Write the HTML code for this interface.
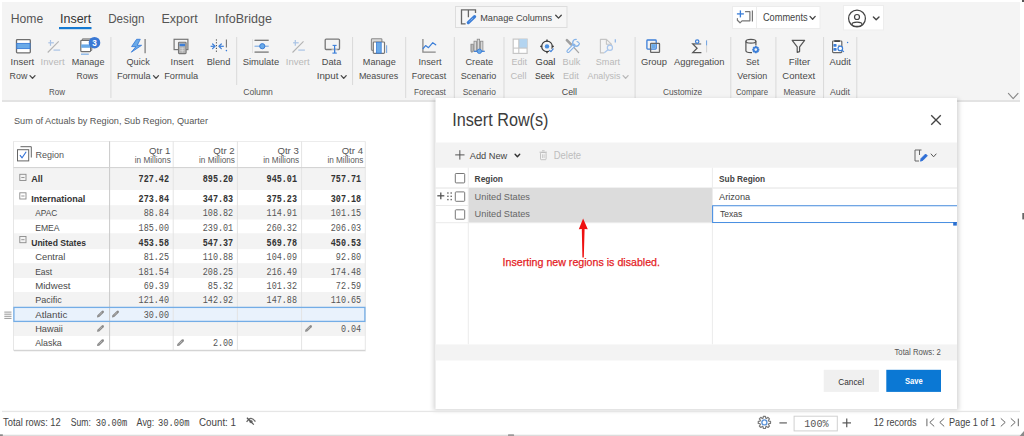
<!DOCTYPE html>
<html><head><meta charset="utf-8"><title>Insert Row(s)</title>
<style>
html,body{margin:0;padding:0;background:#fff;width:1024px;height:436px;overflow:hidden}
svg{display:block;font-family:'Liberation Sans',sans-serif}
svg text{white-space:pre}
</style></head><body>
<svg width="1024" height="436" viewBox="0 0 1024 436">
<rect x="2" y="2" width="1018" height="98" fill="#f4f4f4"/>
<rect x="2" y="100" width="1018" height="2" fill="#e3e3e3"/>
<rect x="1022" y="0" width="2" height="2" fill="#555"/>
<text x="10.75" y="23.00" font-size="13.30" fill="#555" textLength="32.45" lengthAdjust="spacingAndGlyphs">Home</text>
<text x="60.00" y="23.00" font-size="13.30" fill="#333" textLength="31.20" lengthAdjust="spacingAndGlyphs">Insert</text>
<rect x="59" y="27" width="32.5" height="2.2" fill="#1479d2"/>
<text x="108.20" y="23.00" font-size="13.30" fill="#555" textLength="36.30" lengthAdjust="spacingAndGlyphs">Design</text>
<text x="161.50" y="23.00" font-size="13.30" fill="#555" textLength="36.20" lengthAdjust="spacingAndGlyphs">Export</text>
<text x="214.80" y="23.00" font-size="13.30" fill="#555" textLength="57.10" lengthAdjust="spacingAndGlyphs">InfoBridge</text>
<rect x="455.5" y="6.5" width="111.5" height="21" fill="#f6f6f6" stroke="#dddddd" stroke-width="1"/>
<text x="480.20" y="20.60" font-size="9.92" fill="#444" textLength="72.00" lengthAdjust="spacingAndGlyphs">Manage Columns</text>
<path d="M555.7 15.25 L558.5 18.15 L561.3 15.25" stroke="#444" fill="none" stroke-width="1.3" stroke-linecap="round" stroke-linejoin="round"/>
<rect x="732.5" y="6.5" width="87.5" height="22" fill="#ffffff" stroke="#ececec" stroke-width="1"/>
<line x1="756.5" y1="6.5" x2="756.5" y2="28.5" stroke="#ececec" stroke-width="1"/>
<text x="762.90" y="21.30" font-size="9.99" fill="#444" textLength="44.70" lengthAdjust="spacingAndGlyphs">Comments</text>
<path d="M810.0 16.400000000000002 L812.6 19.2 L815.2 16.400000000000002" stroke="#444" fill="none" stroke-width="1.3" stroke-linecap="round" stroke-linejoin="round"/>
<rect x="843.5" y="5.5" width="40" height="24.5" fill="#ffffff" stroke="#ededed" stroke-width="1"/>
<circle cx="857" cy="18.5" r="8.4" fill="none" stroke="#444" stroke-width="1.25"/>
<circle cx="857" cy="17.0" r="2.5" fill="none" stroke="#444" stroke-width="1.2"/>
<ellipse cx="857" cy="24.2" rx="5.0" ry="2.1" fill="none" stroke="#444" stroke-width="1.2"/>
<path d="M873.4000000000001 16.900000000000002 L876.2 19.7 L879.0 16.900000000000002" stroke="#444" fill="none" stroke-width="1.4" stroke-linecap="round" stroke-linejoin="round"/>
<line x1="110.9" y1="37" x2="110.9" y2="98" stroke="#d9d9d9" stroke-width="1"/>
<line x1="405.7" y1="37" x2="405.7" y2="98" stroke="#d9d9d9" stroke-width="1"/>
<line x1="454.3" y1="37" x2="454.3" y2="98" stroke="#d9d9d9" stroke-width="1"/>
<line x1="504" y1="37" x2="504" y2="98" stroke="#d9d9d9" stroke-width="1"/>
<line x1="635.1" y1="37" x2="635.1" y2="98" stroke="#d9d9d9" stroke-width="1"/>
<line x1="730.8" y1="37" x2="730.8" y2="98" stroke="#d9d9d9" stroke-width="1"/>
<line x1="775.9" y1="37" x2="775.9" y2="98" stroke="#d9d9d9" stroke-width="1"/>
<line x1="823.6" y1="37" x2="823.6" y2="98" stroke="#d9d9d9" stroke-width="1"/>
<line x1="856.8" y1="37" x2="856.8" y2="98" stroke="#d9d9d9" stroke-width="1"/>
<line x1="236.7" y1="37" x2="236.7" y2="85" stroke="#d9d9d9" stroke-width="1"/>
<line x1="352.6" y1="37" x2="352.6" y2="85" stroke="#d9d9d9" stroke-width="1"/>
<path d="M1008.4000000000001 93.3 L1013.2 98.7 L1018.0 93.3" stroke="#888" fill="none" stroke-width="1.1" stroke-linecap="round" stroke-linejoin="round"/>
<text x="10.60" y="65.00" font-size="9.90" fill="#4a4a4a" textLength="23.60" lengthAdjust="spacingAndGlyphs">Insert</text>
<text x="9.60" y="79.00" font-size="9.90" fill="#4a4a4a" textLength="17.70" lengthAdjust="spacingAndGlyphs">Row</text>
<path d="M30.0 75.65 L32.5 78.35 L35.0 75.65" stroke="#4a4a4a" fill="none" stroke-width="1.35" stroke-linecap="round" stroke-linejoin="round"/>
<text x="40.60" y="65.00" font-size="9.90" fill="#b9b9b9" textLength="24.00" lengthAdjust="spacingAndGlyphs">Invert</text>
<text x="71.80" y="65.00" font-size="9.90" fill="#4a4a4a" textLength="32.60" lengthAdjust="spacingAndGlyphs">Manage</text>
<text x="76.60" y="79.00" font-size="9.90" fill="#4a4a4a" textLength="21.40" lengthAdjust="spacingAndGlyphs">Rows</text>
<text x="49.00" y="94.50" font-size="9.40" fill="#555" textLength="16.00" lengthAdjust="spacingAndGlyphs">Row</text>
<text x="126.50" y="65.00" font-size="9.90" fill="#4a4a4a" textLength="23.30" lengthAdjust="spacingAndGlyphs">Quick</text>
<text x="116.90" y="79.00" font-size="9.90" fill="#4a4a4a" textLength="33.70" lengthAdjust="spacingAndGlyphs">Formula</text>
<path d="M153.5 75.65 L156 78.35 L158.5 75.65" stroke="#4a4a4a" fill="none" stroke-width="1.35" stroke-linecap="round" stroke-linejoin="round"/>
<text x="170.60" y="65.00" font-size="9.90" fill="#4a4a4a" textLength="23.00" lengthAdjust="spacingAndGlyphs">Insert</text>
<text x="164.20" y="79.00" font-size="9.90" fill="#4a4a4a" textLength="34.00" lengthAdjust="spacingAndGlyphs">Formula</text>
<text x="206.70" y="65.00" font-size="9.90" fill="#4a4a4a" textLength="23.60" lengthAdjust="spacingAndGlyphs">Blend</text>
<text x="242.70" y="65.00" font-size="9.90" fill="#4a4a4a" textLength="36.40" lengthAdjust="spacingAndGlyphs">Simulate</text>
<text x="285.80" y="65.00" font-size="9.90" fill="#b9b9b9" textLength="23.90" lengthAdjust="spacingAndGlyphs">Invert</text>
<text x="321.80" y="65.00" font-size="9.90" fill="#4a4a4a" textLength="19.50" lengthAdjust="spacingAndGlyphs">Data</text>
<text x="316.70" y="79.00" font-size="9.90" fill="#4a4a4a" textLength="21.70" lengthAdjust="spacingAndGlyphs">Input</text>
<path d="M341.2 75.65 L343.7 78.35 L346.2 75.65" stroke="#4a4a4a" fill="none" stroke-width="1.35" stroke-linecap="round" stroke-linejoin="round"/>
<text x="362.80" y="65.00" font-size="9.90" fill="#4a4a4a" textLength="32.90" lengthAdjust="spacingAndGlyphs">Manage</text>
<text x="358.90" y="79.00" font-size="9.90" fill="#4a4a4a" textLength="39.30" lengthAdjust="spacingAndGlyphs">Measures</text>
<text x="243.20" y="94.50" font-size="9.40" fill="#555" textLength="29.70" lengthAdjust="spacingAndGlyphs">Column</text>
<text x="418.50" y="65.00" font-size="9.90" fill="#4a4a4a" textLength="23.00" lengthAdjust="spacingAndGlyphs">Insert</text>
<text x="411.80" y="79.00" font-size="9.90" fill="#4a4a4a" textLength="34.30" lengthAdjust="spacingAndGlyphs">Forecast</text>
<text x="414.00" y="94.50" font-size="9.40" fill="#555" textLength="31.80" lengthAdjust="spacingAndGlyphs">Forecast</text>
<text x="465.40" y="65.00" font-size="9.90" fill="#4a4a4a" textLength="27.80" lengthAdjust="spacingAndGlyphs">Create</text>
<text x="460.70" y="79.00" font-size="9.90" fill="#4a4a4a" textLength="35.70" lengthAdjust="spacingAndGlyphs">Scenario</text>
<text x="462.70" y="94.50" font-size="9.40" fill="#555" textLength="33.20" lengthAdjust="spacingAndGlyphs">Scenario</text>
<text x="511.60" y="65.00" font-size="9.90" fill="#b9b9b9" textLength="15.40" lengthAdjust="spacingAndGlyphs">Edit</text>
<text x="510.40" y="79.00" font-size="9.90" fill="#b9b9b9" textLength="16.10" lengthAdjust="spacingAndGlyphs">Cell</text>
<text x="535.60" y="65.00" font-size="9.90" fill="#333" textLength="19.80" lengthAdjust="spacingAndGlyphs">Goal</text>
<text x="535.00" y="79.00" font-size="9.90" fill="#333" textLength="19.30" lengthAdjust="spacingAndGlyphs">Seek</text>
<text x="562.60" y="65.00" font-size="9.90" fill="#b9b9b9" textLength="17.70" lengthAdjust="spacingAndGlyphs">Bulk</text>
<text x="563.00" y="79.00" font-size="9.90" fill="#b9b9b9" textLength="15.70" lengthAdjust="spacingAndGlyphs">Edit</text>
<text x="595.80" y="65.00" font-size="9.90" fill="#b9b9b9" textLength="24.20" lengthAdjust="spacingAndGlyphs">Smart</text>
<text x="587.50" y="79.00" font-size="9.90" fill="#b9b9b9" textLength="32.90" lengthAdjust="spacingAndGlyphs">Analysis</text>
<path d="M623.1 75.65 L625.6 78.35 L628.1 75.65" stroke="#b9b9b9" fill="none" stroke-width="1.35" stroke-linecap="round" stroke-linejoin="round"/>
<text x="561.80" y="94.50" font-size="9.40" fill="#444" textLength="15.20" lengthAdjust="spacingAndGlyphs">Cell</text>
<text x="640.90" y="65.00" font-size="9.90" fill="#4a4a4a" textLength="26.00" lengthAdjust="spacingAndGlyphs">Group</text>
<text x="674.10" y="65.00" font-size="9.90" fill="#4a4a4a" textLength="50.30" lengthAdjust="spacingAndGlyphs">Aggregation</text>
<text x="662.90" y="94.50" font-size="9.40" fill="#555" textLength="39.30" lengthAdjust="spacingAndGlyphs">Customize</text>
<text x="745.90" y="65.00" font-size="9.90" fill="#4a4a4a" textLength="13.30" lengthAdjust="spacingAndGlyphs">Set</text>
<text x="737.20" y="79.00" font-size="9.90" fill="#4a4a4a" textLength="30.00" lengthAdjust="spacingAndGlyphs">Version</text>
<text x="736.00" y="94.50" font-size="9.40" fill="#555" textLength="32.00" lengthAdjust="spacingAndGlyphs">Compare</text>
<text x="788.80" y="65.00" font-size="9.90" fill="#4a4a4a" textLength="21.50" lengthAdjust="spacingAndGlyphs">Filter</text>
<text x="782.30" y="79.00" font-size="9.90" fill="#4a4a4a" textLength="32.80" lengthAdjust="spacingAndGlyphs">Context</text>
<text x="783.50" y="94.50" font-size="9.40" fill="#555" textLength="32.10" lengthAdjust="spacingAndGlyphs">Measure</text>
<text x="829.50" y="65.00" font-size="9.90" fill="#4a4a4a" textLength="21.40" lengthAdjust="spacingAndGlyphs">Audit</text>
<text x="830.00" y="94.50" font-size="9.40" fill="#555" textLength="20.00" lengthAdjust="spacingAndGlyphs">Audit</text>
<rect x="16.5" y="39.6" width="13.8" height="13.3" fill="#fff" stroke="#6e6e6e" stroke-width="1.3" rx="0.8"/>
<rect x="16.8" y="43.4" width="13.2" height="5.2" fill="#6aaae8" stroke="#3b7ed8" stroke-width="0.9"/>
<line x1="48.300000000000004" y1="42.8" x2="53.9" y2="42.8" stroke="#a9c3e5" stroke-width="1.2"/>
<line x1="50.5" y1="40.0" x2="50.5" y2="45.8" stroke="#a9c3e5" stroke-width="1.2"/>
<line x1="47.7" y1="52.5" x2="58.7" y2="41.3" stroke="#b3b3b3" stroke-width="1.1"/>
<line x1="53.5" y1="50.1" x2="60.1" y2="50.1" stroke="#a9c3e5" stroke-width="1.2"/>
<line x1="293.09999999999997" y1="42.8" x2="298.7" y2="42.8" stroke="#a9c3e5" stroke-width="1.2"/>
<line x1="295.29999999999995" y1="40.0" x2="295.29999999999995" y2="45.8" stroke="#a9c3e5" stroke-width="1.2"/>
<line x1="292.5" y1="52.5" x2="303.5" y2="41.3" stroke="#b3b3b3" stroke-width="1.1"/>
<line x1="298.29999999999995" y1="50.1" x2="304.9" y2="50.1" stroke="#a9c3e5" stroke-width="1.2"/>
<rect x="82.4" y="38.9" width="9.4" height="11.6" fill="#e0e0e0" stroke="#8c8c8c" stroke-width="1.1" rx="0.8"/>
<rect x="80.8" y="40.3" width="9.8" height="11.3" fill="#fff" stroke="#6e6e6e" stroke-width="1.2" rx="0.8"/>
<rect x="81.2" y="44.4" width="9" height="3.4" fill="#6aaae8"/>
<line x1="81" y1="54.2" x2="88.8" y2="54.2" stroke="#8ab6e8" stroke-width="1.4"/>
<circle cx="94.5" cy="42.7" r="5.8" fill="#3a78d4"/>
<text x="94.5" y="45.6" font-size="8.2" font-weight="700" fill="#fff" text-anchor="middle">3</text>
<path d="M139.9 39.3 L136.6 39.3 L131.6 46.6 L136 46.6 L131.3 52.2 L141.6 45.3 L137.6 45.3 Z" stroke="#3b7ed8" fill="#6aaae8" stroke-width="0.9" stroke-linejoin="round" stroke-linecap="round"/>
<line x1="145.1" y1="39.1" x2="145.1" y2="53.3" stroke="#777" stroke-width="1.2"/>
<rect x="174.1" y="39.3" width="13.8" height="10.3" fill="none" stroke="#777" stroke-width="1.2"/>
<rect x="178.5" y="42.3" width="7.6" height="11.3" fill="#b4b4b4" stroke="#777" stroke-width="1.1" rx="0.8"/>
<rect x="179.6" y="43.8" width="5.4" height="2.4" fill="#3b7ed8"/>
<line x1="180.2" y1="48.3" x2="184.4" y2="48.3" stroke="#dddddd" stroke-width="0.6"/>
<line x1="180.2" y1="50.6" x2="184.4" y2="50.6" stroke="#dddddd" stroke-width="0.6"/>
<line x1="182.3" y1="47.3" x2="182.3" y2="52.6" stroke="#dddddd" stroke-width="0.6"/>
<line x1="216.4" y1="39.4" x2="216.4" y2="53.3" stroke="#444" stroke-width="1" stroke-dasharray="1.2 1.6"/>
<line x1="210.6" y1="46.3" x2="214.6" y2="46.3" stroke="#3b7ed8" stroke-width="1.2"/>
<path d="M212.6 44 L215 46.3 L212.6 48.6" stroke="#3b7ed8" fill="none" stroke-width="1.2" stroke-linejoin="round" stroke-linecap="round"/>
<line x1="223.8" y1="46.3" x2="219.2" y2="46.3" stroke="#3b7ed8" stroke-width="1.2"/>
<path d="M221.3 44 L218.9 46.3 L221.3 48.6" stroke="#3b7ed8" fill="none" stroke-width="1.2" stroke-linejoin="round" stroke-linecap="round"/>
<line x1="226.4" y1="39.6" x2="226.4" y2="47.6" stroke="#777" stroke-width="1.1"/>
<circle cx="226.4" cy="50.6" r="0.8" fill="#3b7ed8"/>
<line x1="252.5" y1="39.2" x2="252.5" y2="53" stroke="#dcdcdc" stroke-width="0.8"/>
<line x1="254.5" y1="40.3" x2="268.7" y2="40.3" stroke="#777" stroke-width="1.3"/>
<line x1="254.5" y1="46.2" x2="268.7" y2="46.2" stroke="#7aa9e2" stroke-width="1.1"/>
<circle cx="262.3" cy="46.2" r="2.6" fill="#6aaae8" stroke="#3b7ed8" stroke-width="1"/>
<line x1="254.5" y1="52.1" x2="268.7" y2="52.1" stroke="#777" stroke-width="1.3"/>
<rect x="325.2" y="39.1" width="14.3" height="10.4" fill="none" stroke="#777" stroke-width="1.3" rx="1"/>
<line x1="334.6" y1="45.6" x2="334.6" y2="52.9" stroke="#3b7ed8" stroke-width="1.2"/>
<line x1="332.6" y1="45.4" x2="336.6" y2="45.4" stroke="#3b7ed8" stroke-width="1.1"/>
<line x1="332.4" y1="53.1" x2="336.8" y2="53.1" stroke="#3b7ed8" stroke-width="1.1"/>
<rect x="331.5" y="49.5" width="6" height="1.0" fill="#f4f4f4"/>
<line x1="334.6" y1="48.5" x2="334.6" y2="52.9" stroke="#3b7ed8" stroke-width="1.2"/>
<rect x="371.4" y="38.8" width="10.5" height="11.6" fill="#dadada" stroke="#8c8c8c" stroke-width="1.1" rx="0.8"/>
<rect x="373.3" y="42" width="11.2" height="11.4" fill="#fff" stroke="#777" stroke-width="1.2" rx="0.8"/>
<rect x="376.5" y="42.3" width="4.7" height="10.8" fill="#6aaae8" stroke="#3b7ed8" stroke-width="0.8"/>
<line x1="386.6" y1="45.2" x2="386.6" y2="53.1" stroke="#7aa9e2" stroke-width="1.1"/>
<path d="M422.9 39.1 L422.9 52.1 L435.7 52.1" stroke="#888" fill="none" stroke-width="1.3"/>
<path d="M423.1 48.5 L425.6 45.6 L428.5 47.7 L432.8 42.7 L435.7 44.8" stroke="#3b7ed8" fill="none" stroke-width="1.2" stroke-linejoin="round" stroke-linecap="round"/>
<rect x="470.9" y="44.2" width="2.4" height="7.099999999999994" fill="#d8d8d8" stroke="#8a8a8a" stroke-width="0.8"/>
<rect x="474.0" y="41.2" width="2.4" height="10.099999999999994" fill="#d8d8d8" stroke="#8a8a8a" stroke-width="0.8"/>
<rect x="477.2" y="39.2" width="2.4" height="12.099999999999994" fill="#d8d8d8" stroke="#8a8a8a" stroke-width="0.8"/>
<rect x="480.5" y="41.2" width="2.4" height="10.099999999999994" fill="#d8d8d8" stroke="#8a8a8a" stroke-width="0.8"/>
<line x1="471.9" y1="44" x2="471.9" y2="53" stroke="#888" stroke-width="0.8"/>
<line x1="474" y1="51.3" x2="484.8" y2="51.3" stroke="#3b7ed8" stroke-width="1.2"/>
<circle cx="479.4" cy="51.3" r="2.2" fill="#6aaae8" stroke="#3b7ed8" stroke-width="0.9"/>
<rect x="513.2" y="39.1" width="13.9" height="14.3" fill="#fff" stroke="#c6c6c6" stroke-width="1.2"/>
<rect x="518.8" y="39.1" width="8.3" height="9" fill="#b3d4f0"/>
<line x1="518.8" y1="39.1" x2="518.8" y2="53.4" stroke="#c6c6c6" stroke-width="1.1"/>
<line x1="513.2" y1="48.1" x2="527.1" y2="48.1" stroke="#c6c6c6" stroke-width="1.1"/>
<circle cx="547" cy="46.4" r="5.3" fill="none" stroke="#3a3a3a" stroke-width="1.2"/>
<line x1="547" y1="39.6" x2="547" y2="41.6" stroke="#3a3a3a" stroke-width="1.4"/>
<line x1="547" y1="51.2" x2="547" y2="53.2" stroke="#3a3a3a" stroke-width="1.4"/>
<line x1="540.2" y1="46.4" x2="542.2" y2="46.4" stroke="#3a3a3a" stroke-width="1.4"/>
<line x1="551.8" y1="46.4" x2="553.8" y2="46.4" stroke="#3a3a3a" stroke-width="1.4"/>
<circle cx="547" cy="46.4" r="2.2" fill="#4a8fe0"/>
<rect x="549.3" y="48.6" width="4" height="4" fill="#f4f4f4"/>
<path d="M549.6 50.4 L550.9 51.6 L553.2 48.8" stroke="#3b7ed8" fill="none" stroke-width="1.1" stroke-linejoin="round" stroke-linecap="round"/>
<line x1="566.9" y1="40.1" x2="571.0" y2="44.3" stroke="#a0a0a0" stroke-width="2.6" stroke-linejoin="round" stroke-linecap="round"/>
<line x1="571.0" y1="44.3" x2="578.6" y2="52.6" stroke="#a6a6a6" stroke-width="1.3" stroke-linejoin="round" stroke-linecap="round"/>
<path d="M568.2 51.2 L573.8 45.4" stroke="#86b3e8" fill="none" stroke-width="3.6" stroke-linejoin="round" stroke-linecap="round"/>
<path d="M568.2 51.2 L573.8 45.4" stroke="#f1f5fa" fill="none" stroke-width="1.4" stroke-linejoin="round" stroke-linecap="round"/>
<path d="M576.2 39.4 A3.4 3.4 0 1 0 579.4 43.6" stroke="#86b3e8" fill="none" stroke-width="1.3" stroke-linejoin="round" stroke-linecap="round"/>
<path d="M577.0 41.6 L578.8 42.6" stroke="#86b3e8" fill="none" stroke-width="1.1" stroke-linejoin="round" stroke-linecap="round"/>
<path d="M606.4 39.4 L600.4 39.4 L600.4 52.9 L603.8 52.9 M606.4 39.4 L611.4 44.2 L611.4 45 M606.4 39.4 L606.4 44.2 L611.4 44.2" stroke="#c4c4c4" fill="none" stroke-width="1.1" stroke-linejoin="round" stroke-linecap="round"/>
<circle cx="609.9" cy="47.8" r="2.6" fill="none" stroke="#a9c6ec" stroke-width="1.2"/>
<line x1="608.0" y1="49.8" x2="604.3" y2="52.8" stroke="#a9c6ec" stroke-width="1.2"/>
<line x1="615.3" y1="39.3" x2="615.3" y2="42.5" stroke="#8cb4e8" stroke-width="1.2"/>
<rect x="646.9" y="40.0" width="9.3" height="9.1" fill="none" stroke="#3b7ed8" stroke-width="1.3" rx="0.8"/>
<rect x="650.6" y="43.4" width="8.9" height="8.9" fill="none" stroke="#666" stroke-width="1.3" rx="0.6"/>
<rect x="651.3" y="44.1" width="4.3" height="4.4" fill="#6aaae8"/>
<path d="M701.2 44 L692.7 43.9 L697.1 48.2 L692.7 52.7 L701.4 52.7" stroke="#555" fill="none" stroke-width="1.2" stroke-linejoin="miter"/>
<circle cx="697.2" cy="41.6" r="1.7" fill="none" stroke="#3b7ed8" stroke-width="1.2"/>
<line x1="706.6" y1="40.4" x2="706.6" y2="45.6" stroke="#6a9fe0" stroke-width="1.0"/>
<line x1="706.6" y1="45.6" x2="706.6" y2="52.4" stroke="#c8c8c8" stroke-width="0.8"/>
<ellipse cx="750.9" cy="41.3" rx="5" ry="1.9" fill="none" stroke="#555" stroke-width="1.2"/>
<path d="M745.9 41.3 L745.9 50.8 Q745.9 52.6 750.9 52.6 L752 52.6 M755.9 41.3 L755.9 45.6" stroke="#555" fill="none" stroke-width="1.2"/>
<g transform="translate(755.8 49.6)">
<path d="M3.58 -0.92 L3.58 0.92 L2.34 1.13 L2.46 0.86 L3.18 1.89 L1.89 3.18 L0.86 2.46 L1.13 2.34 L0.92 3.58 L-0.92 3.58 L-1.13 2.34 L-0.86 2.46 L-1.89 3.18 L-3.18 1.89 L-2.46 0.86 L-2.34 1.13 L-3.58 0.92 L-3.58 -0.92 L-2.34 -1.13 L-2.46 -0.86 L-3.18 -1.89 L-1.89 -3.18 L-0.86 -2.46 L-1.13 -2.34 L-0.92 -3.58 L0.92 -3.58 L1.13 -2.34 L0.86 -2.46 L1.89 -3.18 L3.18 -1.89 L2.46 -0.86 L2.34 -1.13Z" fill="#3b7ed8"/>
<circle cx="0" cy="0" r="1.3" fill="#f4f4f4"/>
</g>
<path d="M792.2 40.3 L804.6 40.3 L799.6 46.8 L799.6 51.6 L797.2 52.4 L797.2 46.8 Z" stroke="#555" fill="none" stroke-width="1.2" stroke-linejoin="round" stroke-linecap="round"/>
<rect x="832.6" y="41" width="9.2" height="11.6" fill="#fff" stroke="#666" stroke-width="1.2" rx="0.8"/>
<rect x="834.3" y="40.2" width="5.6" height="1.8" fill="#444"/>
<rect x="833.4" y="44.1" width="3.2" height="2.6" fill="#3b7ed8" rx="0.6"/>
<rect x="833.4" y="48.1" width="3.2" height="2.6" fill="#3b7ed8" rx="0.6"/>
<line x1="837.8" y1="45.3" x2="840.4" y2="45.3" stroke="#999" stroke-width="0.8"/>
<circle cx="840.3" cy="48.4" r="2.3" fill="#fff" stroke="#3b7ed8" stroke-width="1.2"/>
<line x1="841.9" y1="50.1" x2="843.9" y2="51.9" stroke="#3b7ed8" stroke-width="1.2"/>
<circle cx="847.6" cy="42.5" r="0.7" fill="#3b7ed8"/>
<path d="M465.6 23.8 L461.5 23.8 L461.5 9.8 L475.5 9.8 L475.5 13.1 M468.4 9.8 L468.4 17.2" stroke="#666" fill="none" stroke-width="1.3"/>
<path d="M468.3 22.6 L474.6 16.6" stroke="#3b7ed8" fill="none" stroke-width="3.2" stroke-linejoin="round" stroke-linecap="round"/>
<path d="M469.6 21.4 L473.4 17.8" stroke="#dfeaf8" fill="none" stroke-width="0.7" stroke-dasharray="1 0.9"/>
<line x1="736.9" y1="13.9" x2="743.9" y2="13.9" stroke="#3b7ed8" stroke-width="1.3"/>
<line x1="740.4" y1="10.4" x2="740.4" y2="17.4" stroke="#3b7ed8" stroke-width="1.3"/>
<path d="M745.5 11.7 L749.9 11.7 L749.9 20.8 L742 20.8 L740 22.8 L737.4 20.3 L737.4 18.6" stroke="#777" fill="none" stroke-width="1.2" stroke-linejoin="round" stroke-linecap="round"/>
<line x1="752.4" y1="10.6" x2="752.4" y2="21.6" stroke="#777" stroke-width="1.2"/>
<text x="14.00" y="124.10" font-size="9.89" fill="#555" textLength="194.00" lengthAdjust="spacingAndGlyphs">Sum of Actuals by Region, Sub Region, Quarter</text>
<rect x="14.0" y="350" width="351.8" height="1.5" fill="#e9e9e9"/>
<rect x="13.5" y="141.3" width="351.8" height="26.2" fill="#ffffff"/>
<line x1="13.5" y1="141.5" x2="365.3" y2="141.5" stroke="#ececec" stroke-width="1"/>
<rect x="13.5" y="168" width="351.8" height="22" fill="#f3f3f3"/>
<rect x="13.5" y="190" width="351.8" height="15.199999999999989" fill="#ffffff"/>
<rect x="13.5" y="205.2" width="351.8" height="14.5" fill="#f3f3f3"/>
<rect x="13.5" y="219.7" width="351.8" height="13.600000000000023" fill="#ffffff"/>
<rect x="13.5" y="233.3" width="351.8" height="16.0" fill="#f3f3f3"/>
<rect x="13.5" y="249.3" width="351.8" height="13.899999999999977" fill="#ffffff"/>
<rect x="13.5" y="263.2" width="351.8" height="15.0" fill="#f3f3f3"/>
<rect x="13.5" y="278.2" width="351.8" height="13.800000000000011" fill="#ffffff"/>
<rect x="13.5" y="292" width="351.8" height="15" fill="#f3f3f3"/>
<rect x="13.5" y="307" width="351.8" height="14.600000000000023" fill="#e9f2fc"/>
<rect x="13.5" y="321.6" width="351.8" height="14.399999999999977" fill="#f3f3f3"/>
<rect x="13.5" y="336" width="351.8" height="14" fill="#ffffff"/>
<line x1="173.2" y1="141.3" x2="173.2" y2="350" stroke="#e4e4e4" stroke-width="1"/>
<line x1="237.4" y1="141.3" x2="237.4" y2="350" stroke="#e4e4e4" stroke-width="1"/>
<line x1="301.6" y1="141.3" x2="301.6" y2="350" stroke="#e4e4e4" stroke-width="1"/>
<line x1="109.6" y1="141.3" x2="109.6" y2="350" stroke="#c9c9c9" stroke-width="1"/>
<line x1="13.5" y1="141.3" x2="13.5" y2="350" stroke="#e6e6e6" stroke-width="1"/>
<line x1="365.3" y1="141.3" x2="365.3" y2="350" stroke="#e6e6e6" stroke-width="1"/>
<line x1="13.5" y1="167.6" x2="365.3" y2="167.6" stroke="#d0d0d0" stroke-width="1"/>
<line x1="13.5" y1="350.3" x2="365.3" y2="350.3" stroke="#cfcfcf" stroke-width="1"/>
<rect x="13.9" y="307.4" width="351.0" height="14.0" fill="none" stroke="#74ade6" stroke-width="1.3"/>
<path d="M20.5 146.7 H31.3 V157.5" stroke="#666" fill="none" stroke-width="1"/>
<rect x="17.5" y="149.7" width="11.2" height="11.2" fill="#fff" stroke="#666" stroke-width="1"/>
<path d="M19.9 155.2 L22.1 157.8 L26.2 151.8" stroke="#2f6fd6" fill="none" stroke-width="1.1" stroke-linejoin="round"/>
<text x="35.50" y="158.00" font-size="9.71" fill="#555" textLength="28.50" lengthAdjust="spacingAndGlyphs">Region</text>
<text x="149.06" y="153.80" font-size="9.60" fill="#555">Qtr 1</text>
<text x="134.80" y="163.30" font-size="8.20" fill="#5a5a5a">in Millions</text>
<text x="213.26" y="153.80" font-size="9.60" fill="#555">Qtr 2</text>
<text x="199.00" y="163.30" font-size="8.20" fill="#5a5a5a">in Millions</text>
<text x="277.46" y="153.80" font-size="9.60" fill="#555">Qtr 3</text>
<text x="263.20" y="163.30" font-size="8.20" fill="#5a5a5a">in Millions</text>
<text x="341.66" y="153.80" font-size="9.60" fill="#555">Qtr 4</text>
<text x="327.40" y="163.30" font-size="8.20" fill="#5a5a5a">in Millions</text>
<rect x="19.8" y="174.3" width="6.2" height="6.2" fill="none" stroke="#8a8a8a" stroke-width="0.9"/>
<line x1="21.3" y1="177.5" x2="24.5" y2="177.5" stroke="#8a8a8a" stroke-width="0.9"/>
<text x="31.20" y="182.40" font-size="9.60" fill="#333" font-weight="700" textLength="11.60" lengthAdjust="spacingAndGlyphs">All</text>
<text x="138.58" y="182.40" font-size="10.50" fill="#333" font-weight="700" font-family="Liberation Mono" textLength="30.42" lengthAdjust="spacingAndGlyphs">727.42</text>
<text x="202.78" y="182.40" font-size="10.50" fill="#333" font-weight="700" font-family="Liberation Mono" textLength="30.42" lengthAdjust="spacingAndGlyphs">895.20</text>
<text x="266.58" y="182.40" font-size="10.50" fill="#333" font-weight="700" font-family="Liberation Mono" textLength="30.42" lengthAdjust="spacingAndGlyphs">945.01</text>
<text x="330.78" y="182.40" font-size="10.50" fill="#333" font-weight="700" font-family="Liberation Mono" textLength="30.42" lengthAdjust="spacingAndGlyphs">757.71</text>
<rect x="19.8" y="192.8" width="6.2" height="6.2" fill="none" stroke="#8a8a8a" stroke-width="0.9"/>
<line x1="21.3" y1="196.0" x2="24.5" y2="196.0" stroke="#8a8a8a" stroke-width="0.9"/>
<text x="31.20" y="201.50" font-size="9.60" fill="#333" font-weight="700" textLength="54.10" lengthAdjust="spacingAndGlyphs">International</text>
<text x="138.58" y="201.50" font-size="10.50" fill="#333" font-weight="700" font-family="Liberation Mono" textLength="30.42" lengthAdjust="spacingAndGlyphs">273.84</text>
<text x="202.78" y="201.50" font-size="10.50" fill="#333" font-weight="700" font-family="Liberation Mono" textLength="30.42" lengthAdjust="spacingAndGlyphs">347.83</text>
<text x="266.58" y="201.50" font-size="10.50" fill="#333" font-weight="700" font-family="Liberation Mono" textLength="30.42" lengthAdjust="spacingAndGlyphs">375.23</text>
<text x="330.78" y="201.50" font-size="10.50" fill="#333" font-weight="700" font-family="Liberation Mono" textLength="30.42" lengthAdjust="spacingAndGlyphs">307.18</text>
<text x="35.20" y="215.50" font-size="9.80" fill="#4a4a4a" textLength="22.00" lengthAdjust="spacingAndGlyphs">APAC</text>
<text x="143.65" y="215.50" font-size="10.50" fill="#555" font-family="Liberation Mono" textLength="25.35" lengthAdjust="spacingAndGlyphs">88.84</text>
<text x="202.78" y="215.50" font-size="10.50" fill="#555" font-family="Liberation Mono" textLength="30.42" lengthAdjust="spacingAndGlyphs">108.82</text>
<text x="266.58" y="215.50" font-size="10.50" fill="#555" font-family="Liberation Mono" textLength="30.42" lengthAdjust="spacingAndGlyphs">114.91</text>
<text x="330.78" y="215.50" font-size="10.50" fill="#555" font-family="Liberation Mono" textLength="30.42" lengthAdjust="spacingAndGlyphs">101.15</text>
<text x="35.20" y="230.70" font-size="9.80" fill="#4a4a4a" textLength="24.40" lengthAdjust="spacingAndGlyphs">EMEA</text>
<text x="138.58" y="230.70" font-size="10.50" fill="#555" font-family="Liberation Mono" textLength="30.42" lengthAdjust="spacingAndGlyphs">185.00</text>
<text x="202.78" y="230.70" font-size="10.50" fill="#555" font-family="Liberation Mono" textLength="30.42" lengthAdjust="spacingAndGlyphs">239.01</text>
<text x="266.58" y="230.70" font-size="10.50" fill="#555" font-family="Liberation Mono" textLength="30.42" lengthAdjust="spacingAndGlyphs">260.32</text>
<text x="330.78" y="230.70" font-size="10.50" fill="#555" font-family="Liberation Mono" textLength="30.42" lengthAdjust="spacingAndGlyphs">206.03</text>
<rect x="19.8" y="236.50000000000003" width="6.2" height="6.2" fill="none" stroke="#8a8a8a" stroke-width="0.9"/>
<line x1="21.3" y1="239.70000000000002" x2="24.5" y2="239.70000000000002" stroke="#8a8a8a" stroke-width="0.9"/>
<text x="31.20" y="245.60" font-size="9.60" fill="#333" font-weight="700" textLength="54.80" lengthAdjust="spacingAndGlyphs">United States</text>
<text x="138.58" y="245.60" font-size="10.50" fill="#333" font-weight="700" font-family="Liberation Mono" textLength="30.42" lengthAdjust="spacingAndGlyphs">453.58</text>
<text x="202.78" y="245.60" font-size="10.50" fill="#333" font-weight="700" font-family="Liberation Mono" textLength="30.42" lengthAdjust="spacingAndGlyphs">547.37</text>
<text x="266.58" y="245.60" font-size="10.50" fill="#333" font-weight="700" font-family="Liberation Mono" textLength="30.42" lengthAdjust="spacingAndGlyphs">569.78</text>
<text x="330.78" y="245.60" font-size="10.50" fill="#333" font-weight="700" font-family="Liberation Mono" textLength="30.42" lengthAdjust="spacingAndGlyphs">450.53</text>
<text x="35.20" y="259.90" font-size="9.80" fill="#4a4a4a" textLength="30.20" lengthAdjust="spacingAndGlyphs">Central</text>
<text x="143.65" y="259.90" font-size="10.50" fill="#555" font-family="Liberation Mono" textLength="25.35" lengthAdjust="spacingAndGlyphs">81.25</text>
<text x="202.78" y="259.90" font-size="10.50" fill="#555" font-family="Liberation Mono" textLength="30.42" lengthAdjust="spacingAndGlyphs">110.88</text>
<text x="266.58" y="259.90" font-size="10.50" fill="#555" font-family="Liberation Mono" textLength="30.42" lengthAdjust="spacingAndGlyphs">104.09</text>
<text x="335.85" y="259.90" font-size="10.50" fill="#555" font-family="Liberation Mono" textLength="25.35" lengthAdjust="spacingAndGlyphs">92.80</text>
<text x="35.20" y="274.50" font-size="9.80" fill="#4a4a4a" textLength="17.00" lengthAdjust="spacingAndGlyphs">East</text>
<text x="138.58" y="274.50" font-size="10.50" fill="#555" font-family="Liberation Mono" textLength="30.42" lengthAdjust="spacingAndGlyphs">181.54</text>
<text x="202.78" y="274.50" font-size="10.50" fill="#555" font-family="Liberation Mono" textLength="30.42" lengthAdjust="spacingAndGlyphs">208.25</text>
<text x="266.58" y="274.50" font-size="10.50" fill="#555" font-family="Liberation Mono" textLength="30.42" lengthAdjust="spacingAndGlyphs">216.49</text>
<text x="330.78" y="274.50" font-size="10.50" fill="#555" font-family="Liberation Mono" textLength="30.42" lengthAdjust="spacingAndGlyphs">174.48</text>
<text x="35.20" y="288.90" font-size="9.80" fill="#4a4a4a" textLength="35.30" lengthAdjust="spacingAndGlyphs">Midwest</text>
<text x="143.65" y="288.90" font-size="10.50" fill="#555" font-family="Liberation Mono" textLength="25.35" lengthAdjust="spacingAndGlyphs">69.39</text>
<text x="207.85" y="288.90" font-size="10.50" fill="#555" font-family="Liberation Mono" textLength="25.35" lengthAdjust="spacingAndGlyphs">85.32</text>
<text x="266.58" y="288.90" font-size="10.50" fill="#555" font-family="Liberation Mono" textLength="30.42" lengthAdjust="spacingAndGlyphs">101.32</text>
<text x="335.85" y="288.90" font-size="10.50" fill="#555" font-family="Liberation Mono" textLength="25.35" lengthAdjust="spacingAndGlyphs">72.59</text>
<text x="35.20" y="303.30" font-size="9.80" fill="#4a4a4a" textLength="26.60" lengthAdjust="spacingAndGlyphs">Pacific</text>
<text x="138.58" y="303.30" font-size="10.50" fill="#555" font-family="Liberation Mono" textLength="30.42" lengthAdjust="spacingAndGlyphs">121.40</text>
<text x="202.78" y="303.30" font-size="10.50" fill="#555" font-family="Liberation Mono" textLength="30.42" lengthAdjust="spacingAndGlyphs">142.92</text>
<text x="266.58" y="303.30" font-size="10.50" fill="#555" font-family="Liberation Mono" textLength="30.42" lengthAdjust="spacingAndGlyphs">147.88</text>
<text x="330.78" y="303.30" font-size="10.50" fill="#555" font-family="Liberation Mono" textLength="30.42" lengthAdjust="spacingAndGlyphs">110.65</text>
<text x="35.20" y="317.50" font-size="9.80" fill="#4a4a4a" textLength="32.10" lengthAdjust="spacingAndGlyphs">Atlantic</text>
<text x="143.65" y="317.50" font-size="10.50" fill="#555" font-family="Liberation Mono" textLength="25.35" lengthAdjust="spacingAndGlyphs">30.00</text>
<text x="35.20" y="332.20" font-size="9.80" fill="#4a4a4a" textLength="27.70" lengthAdjust="spacingAndGlyphs">Hawaii</text>
<text x="340.92" y="332.20" font-size="10.50" fill="#555" font-family="Liberation Mono" textLength="20.28" lengthAdjust="spacingAndGlyphs">0.04</text>
<text x="35.20" y="346.40" font-size="9.80" fill="#4a4a4a" textLength="26.60" lengthAdjust="spacingAndGlyphs">Alaska</text>
<text x="212.92" y="346.40" font-size="10.50" fill="#555" font-family="Liberation Mono" textLength="20.28" lengthAdjust="spacingAndGlyphs">2.00</text>
<path d="M97.0 317.40000000000003 L97.4 315.3 L101.80000000000001 311.0 Q102.9 310.2 103.7 311.0 Q104.4 312.0 103.60000000000001 312.8 L99.2 317.1 Z" stroke="none" fill="#8a8a8a" stroke-width="1"/>
<path d="M98.80000000000001 315.5 L102.0 312.5" stroke="#e8e8e8" fill="none" stroke-width="0.7" stroke-dasharray="0.9 0.8"/>
<path d="M112.0 317.40000000000003 L112.4 315.3 L116.80000000000001 311.0 Q117.9 310.2 118.7 311.0 Q119.4 312.0 118.60000000000001 312.8 L114.2 317.1 Z" stroke="none" fill="#8a8a8a" stroke-width="1"/>
<path d="M113.80000000000001 315.5 L117.0 312.5" stroke="#e8e8e8" fill="none" stroke-width="0.7" stroke-dasharray="0.9 0.8"/>
<path d="M97.0 331.8 L97.4 329.7 L101.80000000000001 325.4 Q102.9 324.59999999999997 103.7 325.4 Q104.4 326.4 103.60000000000001 327.2 L99.2 331.5 Z" stroke="none" fill="#8a8a8a" stroke-width="1"/>
<path d="M98.80000000000001 329.9 L102.0 326.9" stroke="#e8e8e8" fill="none" stroke-width="0.7" stroke-dasharray="0.9 0.8"/>
<path d="M97.0 346.0 L97.4 343.9 L101.80000000000001 339.59999999999997 Q102.9 338.79999999999995 103.7 339.59999999999997 Q104.4 340.59999999999997 103.60000000000001 341.4 L99.2 345.7 Z" stroke="none" fill="#8a8a8a" stroke-width="1"/>
<path d="M98.80000000000001 344.09999999999997 L102.0 341.09999999999997" stroke="#e8e8e8" fill="none" stroke-width="0.7" stroke-dasharray="0.9 0.8"/>
<path d="M305.0 331.8 L305.4 329.7 L309.79999999999995 325.4 Q310.9 324.59999999999997 311.7 325.4 Q312.4 326.4 311.59999999999997 327.2 L307.2 331.5 Z" stroke="none" fill="#8a8a8a" stroke-width="1"/>
<path d="M306.79999999999995 329.9 L310.0 326.9" stroke="#e8e8e8" fill="none" stroke-width="0.7" stroke-dasharray="0.9 0.8"/>
<path d="M177.0 346.0 L177.4 343.9 L181.8 339.59999999999997 Q182.9 338.79999999999995 183.70000000000002 339.59999999999997 Q184.4 340.59999999999997 183.6 341.4 L179.20000000000002 345.7 Z" stroke="none" fill="#8a8a8a" stroke-width="1"/>
<path d="M178.8 344.09999999999997 L182.0 341.09999999999997" stroke="#e8e8e8" fill="none" stroke-width="0.7" stroke-dasharray="0.9 0.8"/>
<line x1="4.3" y1="312.1" x2="11.5" y2="312.1" stroke="#999" stroke-width="1"/>
<line x1="4.3" y1="314.20000000000005" x2="11.5" y2="314.20000000000005" stroke="#999" stroke-width="1"/>
<line x1="4.3" y1="316.3" x2="11.5" y2="316.3" stroke="#999" stroke-width="1"/>
<line x1="4.3" y1="318.40000000000003" x2="11.5" y2="318.40000000000003" stroke="#999" stroke-width="1"/>
<defs><filter id="sh" x="-5%" y="-5%" width="110%" height="110%"><feGaussianBlur stdDeviation="2.2"/></filter></defs>
<rect x="433.5" y="99" width="525.5" height="311.5" fill="rgba(0,0,0,0.16)" filter="url(#sh)"/>
<rect x="435.5" y="98" width="521.5" height="311" fill="#ffffff"/>
<text x="452.20" y="126.10" font-size="17.49" fill="#3c3c3c" textLength="96.30" lengthAdjust="spacingAndGlyphs">Insert Row(s)</text>
<line x1="931.2" y1="115.2" x2="940.8" y2="124.8" stroke="#444" stroke-width="1.3"/>
<line x1="940.8" y1="115.2" x2="931.2" y2="124.8" stroke="#444" stroke-width="1.3"/>
<rect x="435.5" y="142.5" width="521.5" height="25.2" fill="#f3f3f3"/>
<line x1="455.2" y1="154.9" x2="464.5" y2="154.9" stroke="#555" stroke-width="1.0"/>
<line x1="459.85" y1="150.2" x2="459.85" y2="159.6" stroke="#555" stroke-width="1.0"/>
<text x="469.80" y="158.75" font-size="9.98" fill="#444" textLength="37.50" lengthAdjust="spacingAndGlyphs">Add New</text>
<path d="M515.1 154.25 L517.4 156.75 L519.6999999999999 154.25" stroke="#333" fill="none" stroke-width="1.4" stroke-linecap="round" stroke-linejoin="round"/>
<rect x="540.5" y="152.5" width="5.6" height="7.2" fill="none" stroke="#bdbdbd" stroke-width="0.9" rx="0.8"/>
<line x1="539.5" y1="152.2" x2="547" y2="152.2" stroke="#bdbdbd" stroke-width="0.9"/>
<line x1="542" y1="150.8" x2="544.6" y2="150.8" stroke="#bdbdbd" stroke-width="0.9"/>
<line x1="542.5" y1="154.3" x2="542.5" y2="158" stroke="#bdbdbd" stroke-width="0.7"/>
<line x1="544.1" y1="154.3" x2="544.1" y2="158" stroke="#bdbdbd" stroke-width="0.7"/>
<text x="553.80" y="158.75" font-size="10.20" fill="#bdbdbd" textLength="27.30" lengthAdjust="spacingAndGlyphs">Delete</text>
<path d="M921.5 150 H915 V161 H919" stroke="#666" fill="none" stroke-width="1"/>
<line x1="919.5" y1="150" x2="919.5" y2="155" stroke="#666" stroke-width="1"/>
<path d="M920.5 161.2 L921 158.6 L925.6 154 L927.4 155.8 L922.8 160.4 Z" stroke="#2f6fd6" fill="#2f6fd6" stroke-width="0.8"/>
<path d="M931.1 154.0 L933.6 156.8 L936.1 154.0" stroke="#555" fill="none" stroke-width="1.0" stroke-linecap="round" stroke-linejoin="round"/>
<line x1="435.5" y1="188" x2="957" y2="188" stroke="#e2e2e2" stroke-width="1"/>
<rect x="468.3" y="188" width="244.1" height="34.7" fill="#dcdcdc"/>
<line x1="435.5" y1="205.5" x2="468.3" y2="205.5" stroke="#eaeaea" stroke-width="1"/>
<line x1="712.4" y1="205.5" x2="957" y2="205.5" stroke="#eaeaea" stroke-width="1"/>
<line x1="435.5" y1="222.7" x2="957" y2="222.7" stroke="#eaeaea" stroke-width="1"/>
<line x1="468.3" y1="167.7" x2="468.3" y2="344.4" stroke="#ebebeb" stroke-width="1"/>
<line x1="712.4" y1="167.7" x2="712.4" y2="344.4" stroke="#ebebeb" stroke-width="1"/>
<rect x="455.3" y="173.5" width="9.4" height="9.4" fill="#fff" stroke="#777" stroke-width="1" rx="0.8"/>
<rect x="455.3" y="191.9" width="9.4" height="9.4" fill="#fff" stroke="#777" stroke-width="1" rx="0.8"/>
<rect x="455.3" y="209.8" width="9.4" height="9.4" fill="#fff" stroke="#777" stroke-width="1" rx="0.8"/>
<text x="474.60" y="181.70" font-size="9.05" fill="#444" font-weight="700" textLength="28.40" lengthAdjust="spacingAndGlyphs">Region</text>
<text x="719.00" y="181.70" font-size="8.98" fill="#444" font-weight="700" textLength="46.20" lengthAdjust="spacingAndGlyphs">Sub Region</text>
<text x="474.60" y="200.00" font-size="9.97" fill="#666" textLength="55.40" lengthAdjust="spacingAndGlyphs">United States</text>
<text x="474.60" y="217.40" font-size="9.97" fill="#666" textLength="55.40" lengthAdjust="spacingAndGlyphs">United States</text>
<text x="719.00" y="200.00" font-size="9.94" fill="#444" textLength="31.20" lengthAdjust="spacingAndGlyphs">Arizona</text>
<path d="M957 205.8 L712.6 205.8 L712.6 222.5 L957 222.5" stroke="#4a90e2" fill="none" stroke-width="1.1"/>
<text x="719.90" y="217.40" font-size="9.26" fill="#444" textLength="22.40" lengthAdjust="spacingAndGlyphs">Texas</text>
<rect x="953.2" y="222" width="3.6" height="3.6" fill="#2a6fd0"/>
<line x1="437.3" y1="195.8" x2="444.3" y2="195.8" stroke="#555" stroke-width="1.3"/>
<line x1="440.8" y1="192.4" x2="440.8" y2="199.3" stroke="#555" stroke-width="1.3"/>
<rect x="447.2" y="192.3" width="1.4" height="1.4" fill="#666"/>
<rect x="447.2" y="195.60000000000002" width="1.4" height="1.4" fill="#666"/>
<rect x="447.2" y="198.9" width="1.4" height="1.4" fill="#666"/>
<rect x="450.5" y="192.3" width="1.4" height="1.4" fill="#666"/>
<rect x="450.5" y="195.60000000000002" width="1.4" height="1.4" fill="#666"/>
<rect x="450.5" y="198.9" width="1.4" height="1.4" fill="#666"/>
<path d="M583.1 218.6 L578.8 229.3 L581.8 229 L582.4 257.5 L583.8 257.5 L584.6 229 L587.8 229.3 Z" stroke="none" fill="#ee1111" stroke-width="1"/>
<text x="502.60" y="266.30" font-size="11.50" fill="#e41c24" textLength="157.40" lengthAdjust="spacingAndGlyphs" stroke="#e41c24" stroke-width="0.25">Inserting new regions is disabled.</text>
<rect x="435.5" y="344.4" width="521.5" height="16.1" fill="#f3f3f3"/>
<text x="894.50" y="355.40" font-size="8.33" fill="#555" textLength="46.30" lengthAdjust="spacingAndGlyphs">Total Rows: 2</text>
<rect x="823.7" y="369.8" width="55.2" height="22.1" fill="#f0f0f0"/>
<text x="838.20" y="384.70" font-size="8.95" fill="#333" textLength="25.80" lengthAdjust="spacingAndGlyphs">Cancel</text>
<rect x="886.3" y="369.8" width="54.7" height="22.1" fill="#0b78d4"/>
<text x="904.90" y="384.30" font-size="9.60" fill="#ffffff" font-weight="700" textLength="17.70" lengthAdjust="spacingAndGlyphs">Save</text>
<rect x="2" y="410.8" width="1018" height="1.3" fill="#e6e6e6"/>
<rect x="2" y="434.7" width="1018" height="1.3" fill="#dcdcdc"/>
<rect x="0" y="434.3" width="2.8" height="1.7" fill="#888"/>
<path d="M1019.6 436 L1024 431 L1024 436 Z" stroke="none" fill="#8a8a8a" stroke-width="1"/>
<text x="3.00" y="425.70" font-size="10.00" fill="#444" textLength="57.80" lengthAdjust="spacingAndGlyphs">Total rows: 12</text>
<text x="70.80" y="425.70" font-size="10.00" fill="#444" textLength="20.10" lengthAdjust="spacingAndGlyphs">Sum:</text>
<text x="95.70" y="425.70" font-size="10.20" fill="#444" font-family="Liberation Mono" textLength="31.50" lengthAdjust="spacingAndGlyphs">30.00m</text>
<text x="136.60" y="425.70" font-size="10.00" fill="#444" textLength="17.70" lengthAdjust="spacingAndGlyphs">Avg:</text>
<text x="158.00" y="425.70" font-size="10.20" fill="#444" font-family="Liberation Mono" textLength="31.50" lengthAdjust="spacingAndGlyphs">30.00m</text>
<text x="199.00" y="425.70" font-size="10.00" fill="#444" textLength="37.00" lengthAdjust="spacingAndGlyphs">Count: 1</text>
<path d="M246.6 422.0 Q250.9 414.8 255.4 421.6" stroke="#6a6a6a" fill="none" stroke-width="1.2"/>
<circle cx="251.0" cy="421.6" r="1.7" fill="#777"/>
<line x1="246.9" y1="417.8" x2="253.8" y2="424.6" stroke="#555" stroke-width="1.2"/>
<g transform="translate(764.4 422.4)">
<path d="M4.30 -1.33 L6.11 -1.05 L6.11 1.05 L4.30 1.33 L3.98 2.10 L5.06 3.58 L3.58 5.06 L2.10 3.98 L1.33 4.30 L1.05 6.11 L-1.05 6.11 L-1.33 4.30 L-2.10 3.98 L-3.58 5.06 L-5.06 3.58 L-3.98 2.10 L-4.30 1.33 L-6.11 1.05 L-6.11 -1.05 L-4.30 -1.33 L-3.98 -2.10 L-5.06 -3.58 L-3.58 -5.06 L-2.10 -3.98 L-1.33 -4.30 L-1.05 -6.11 L1.05 -6.11 L1.33 -4.30 L2.10 -3.98 L3.58 -5.06 L5.06 -3.58 L3.98 -2.10Z" stroke="#7a7a7a" fill="none" stroke-width="1.2" stroke-linejoin="round"/>
<circle cx="0" cy="0" r="2.5" fill="none" stroke="#5b93d8" stroke-width="1.4"/>
</g>
<line x1="779.4" y1="422.9" x2="786.9" y2="422.9" stroke="#777" stroke-width="1.4"/>
<rect x="794.1" y="416.2" width="43.2" height="14.7" fill="#fff" stroke="#d0d0d0" stroke-width="1"/>
<text x="804.30" y="426.80" font-size="10.00" fill="#555" font-family="Liberation Mono" textLength="24.30" lengthAdjust="spacingAndGlyphs">100%</text>
<line x1="842.5" y1="422.9" x2="851" y2="422.9" stroke="#555" stroke-width="1.2"/>
<line x1="846.75" y1="418.5" x2="846.75" y2="427.3" stroke="#555" stroke-width="1.2"/>
<text x="873.80" y="425.60" font-size="10.00" fill="#444" textLength="42.80" lengthAdjust="spacingAndGlyphs">12 records</text>
<line x1="926.9" y1="418.6" x2="926.9" y2="426.2" stroke="#555" stroke-width="0.9"/>
<path d="M934.2 418.4 L929.8 422.4 L934.2 426.4" stroke="#555" fill="none" stroke-width="0.9"/>
<path d="M944.2 418.4 L939.8 422.4 L944.2 426.4" stroke="#555" fill="none" stroke-width="0.9"/>
<text x="949.00" y="425.60" font-size="10.00" fill="#444" textLength="46.60" lengthAdjust="spacingAndGlyphs">Page 1 of 1</text>
<path d="M1000.8 418.4 L1005.2 422.4 L1000.8 426.4" stroke="#555" fill="none" stroke-width="0.9"/>
<path d="M1010.8 418.4 L1015.2 422.4 L1010.8 426.4" stroke="#555" fill="none" stroke-width="0.9"/>
<line x1="1018.3" y1="418.6" x2="1018.3" y2="426.2" stroke="#555" stroke-width="0.9"/>
<rect x="1022.3" y="213" width="1.7" height="6.4" fill="#666"/>
<rect x="508" y="434.2" width="6.1" height="1.8" fill="#9a9a9a" rx="0.6"/>
</svg>
</body></html>
